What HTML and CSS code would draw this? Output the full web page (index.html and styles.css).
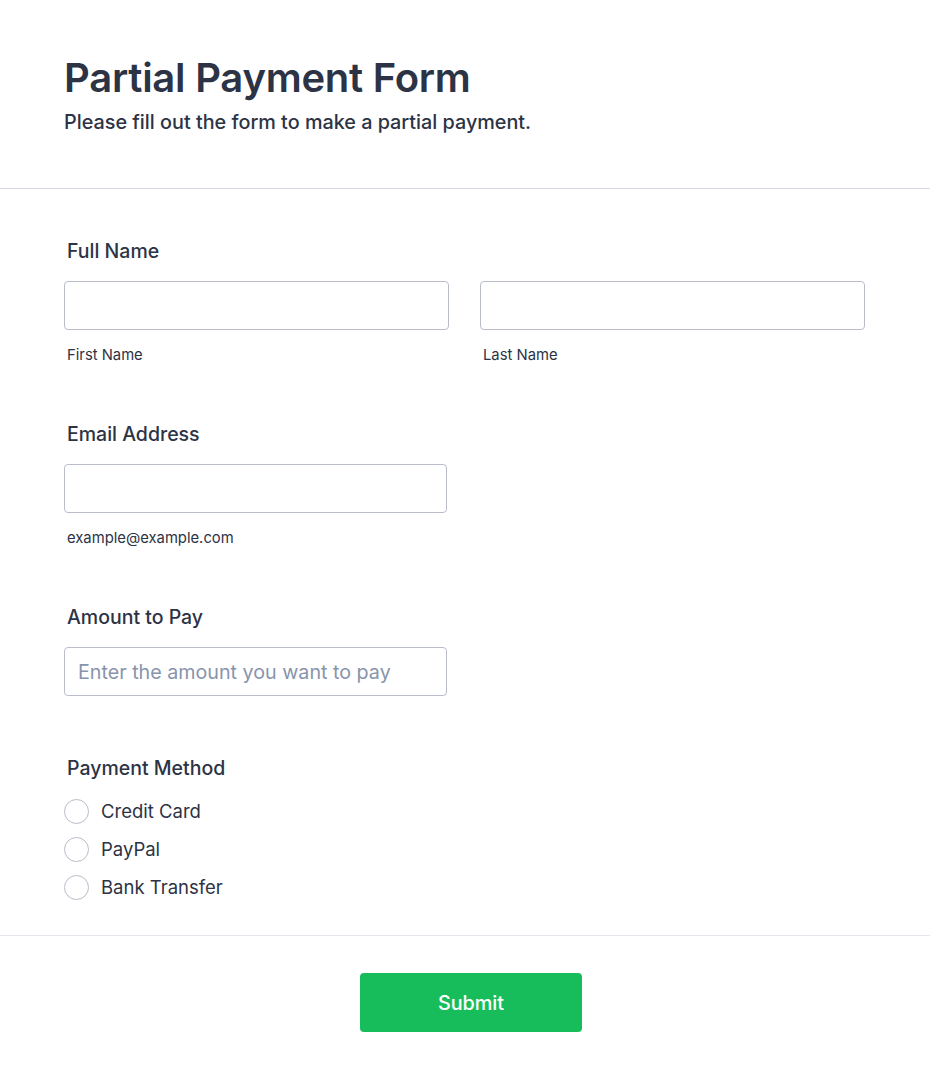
FILE: index.html
```html
<!DOCTYPE html>
<html lang="en">
<head>
  <meta charset="UTF-8">
  <title>Partial Payment Form</title>
  <link rel="stylesheet" href="styles.css">
</head>
<body>
  <form class="form" id="partialPaymentForm">
    <div class="form-header">
      <h1>Partial Payment Form</h1>
      <p class="subheader">Please fill out the form to make a partial payment.</p>
    </div>

    <div class="form-body">
      <div class="field">
        <label class="field-label">Full Name</label>
        <div class="name-row">
          <div class="sub-field">
            <input type="text" class="input" id="firstName">
            <span class="sublabel">First Name</span>
          </div>
          <div class="sub-field">
            <input type="text" class="input" id="lastName">
            <span class="sublabel">Last Name</span>
          </div>
        </div>
      </div>

      <div class="field">
        <label class="field-label" for="email">Email Address</label>
        <div class="sub-field half">
          <input type="email" class="input" id="email">
          <span class="sublabel">example@example.com</span>
        </div>
      </div>

      <div class="field no-sub">
        <label class="field-label" for="amount">Amount to Pay</label>
        <div class="sub-field half">
          <input type="text" class="input" id="amount" placeholder="Enter the amount you want to pay">
        </div>
      </div>

      <div class="field last">
        <label class="field-label">Payment Method</label>
        <div class="options">
          <label class="option"><input type="radio" name="method" value="Credit Card"><span class="radio"></span>Credit Card</label>
          <label class="option"><input type="radio" name="method" value="PayPal"><span class="radio"></span>PayPal</label>
          <label class="option"><input type="radio" name="method" value="Bank Transfer"><span class="radio"></span>Bank Transfer</label>
        </div>
      </div>
    </div>

    <div class="form-footer">
      <button type="submit" class="submit-btn">Submit</button>
    </div>
  </form>
</body>
</html>
```

FILE: styles.css
```css
body {
  margin: 0;
  padding: 0;
  background: #fff;
  color: #2c3345;
  font-family: Inter, "Noto Sans", sans-serif;
}
.form {
  width: 100%;
}
.form-header {
  padding: 54px 64px 54px;
  border-bottom: 1px solid #d8dae9;
}
h1 {
  margin: 0;
  font-size: 40px;
  line-height: 48px;
  font-weight: 600;
  letter-spacing: -0.25px;
  color: #2c3345;
}
.subheader {
  margin: 8px 0 0;
  font-size: 19.8px;
  line-height: 24px;
  font-weight: 500;
}
.form-body {
  padding: 50px 65px 29px 64px;
  border-bottom: 1px solid #e6e6ee;
}
.field {
  margin-bottom: 58px;
}
.field.no-sub {
  margin-bottom: 60px;
}
.field.last {
  margin-bottom: 0;
}
.field-label {
  display: block;
  padding-left: 3px;
  font-size: 19.5px;
  line-height: 24px;
  font-weight: 500;
  margin-bottom: 18px;
}
.name-row {
  display: grid;
  grid-template-columns: 385px 385px;
  column-gap: 31px;
}
.sub-field.half {
  width: 383px;
}
.input {
  display: block;
  box-sizing: border-box;
  width: 100%;
  height: 49px;
  margin: 0;
  padding: 0 13px;
  border: 1px solid #b8bdc9;
  border-radius: 4px;
  font-family: inherit;
  font-size: 19.7px;
  color: #2c3345;
  background: #fff;
}
.input::placeholder {
  color: #8894ab;
}
.sublabel {
  display: block;
  margin-top: 16px;
  padding-left: 3px;
  font-size: 14.8px;
  line-height: 18px;
  color: #2c3345;
}
.options {
  margin-top: -6px;
}
.option {
  display: flex;
  align-items: center;
  height: 38px;
  font-size: 18.5px;
  cursor: pointer;
}
.option input {
  display: none;
}
.radio {
  box-sizing: border-box;
  width: 25px;
  height: 25px;
  border: 1px solid #b8bdc9;
  border-radius: 50%;
  margin-right: 12px;
  flex-shrink: 0;
}
.option input:checked + .radio {
  border: 7px solid #2e69ff;
}
.form-footer {
  display: flex;
  justify-content: center;
  padding: 37px 0 50px;
}
.submit-btn {
  width: 222px;
  height: 59px;
  margin-left: 12px;
  border: none;
  border-radius: 4px;
  background: #18bd5b;
  color: #fff;
  font-family: inherit;
  font-size: 19.8px;
  font-weight: 500;
  cursor: pointer;
}
.submit-btn:hover {
  background: #16aa52;
}
```
